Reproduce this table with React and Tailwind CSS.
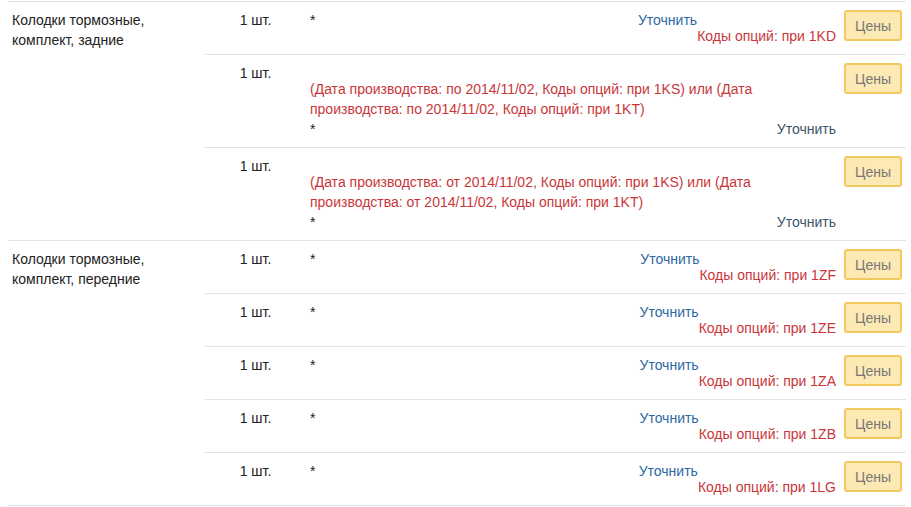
const groups = [
  {
    name: "Колодки тормозные, комплект, задние",
    rows: [
      { code: "1KD" },
      { note: "(Дата производства: по 2014/11/02, Коды опций: при 1KS) или (Дата производства: по 2014/11/02, Коды опций: при 1KT)" },
      { note: "(Дата производства: от 2014/11/02, Коды опций: при 1KS) или (Дата производства: от 2014/11/02, Коды опций: при 1KT)" },
    ],
  },
  {
    name: "Колодки тормозные, комплект, передние",
    rows: [{ code: "1ZF" }, { code: "1ZE" }, { code: "1ZA" }, { code: "1ZB" }, { code: "1LG" }],
  },
];

function Details({ row }) {
  if (row.note) {
    return (
      <div className="pt-4">
        <div className="text-[#c9363a]">{row.note}</div>
        <div className="flex justify-between">
          <span>*</span>
          <span className="text-[#3b5569]">Уточнить</span>
        </div>
      </div>
    );
  }
  return (
    <div className="flex justify-between">
      <span>*</span>
      <div className="flex">
        <span className="text-[#2c68a3]">Уточнить</span>
        <span className="mt-4 text-[#c9363a]">Коды опций: при {row.code}</span>
      </div>
    </div>
  );
}

export default function App() {
  return (
    <div className="bg-white pt-px pl-2 font-['Liberation_Sans',Arial,sans-serif] text-[14px] leading-[20px] text-[#222]">
      <table className="w-[898px] table-fixed border-collapse">
        <colgroup>
          <col className="w-[197px]" />
          <col className="w-[101px]" />
          <col className="w-[534px]" />
          <col className="w-[66px]" />
        </colgroup>
        <tbody>
          {groups.map((g) =>
            g.rows.map((row, i) => (
              <tr key={g.name + i} className="border-y border-[#e3e3e3]">
                {i === 0 && (
                  <td rowSpan={g.rows.length} className="border-y border-[#e3e3e3] px-1 pt-2 align-top">
                    {g.name}
                  </td>
                )}
                <td className="px-1 pt-2 pb-2 text-center align-top">1 шт.</td>
                <td className="px-1 pt-2 pb-2 align-top">
                  <Details row={row} />
                </td>
                <td className="px-1 pt-2 pb-2 align-top">
                  <button className="h-[31px] w-[58px] rounded-[3px] border-2 border-[#f3c85e] bg-[#fde9b3] text-[#777]">
                    Цены
                  </button>
                </td>
              </tr>
            ))
          )}
        </tbody>
      </table>
    </div>
  );
}
